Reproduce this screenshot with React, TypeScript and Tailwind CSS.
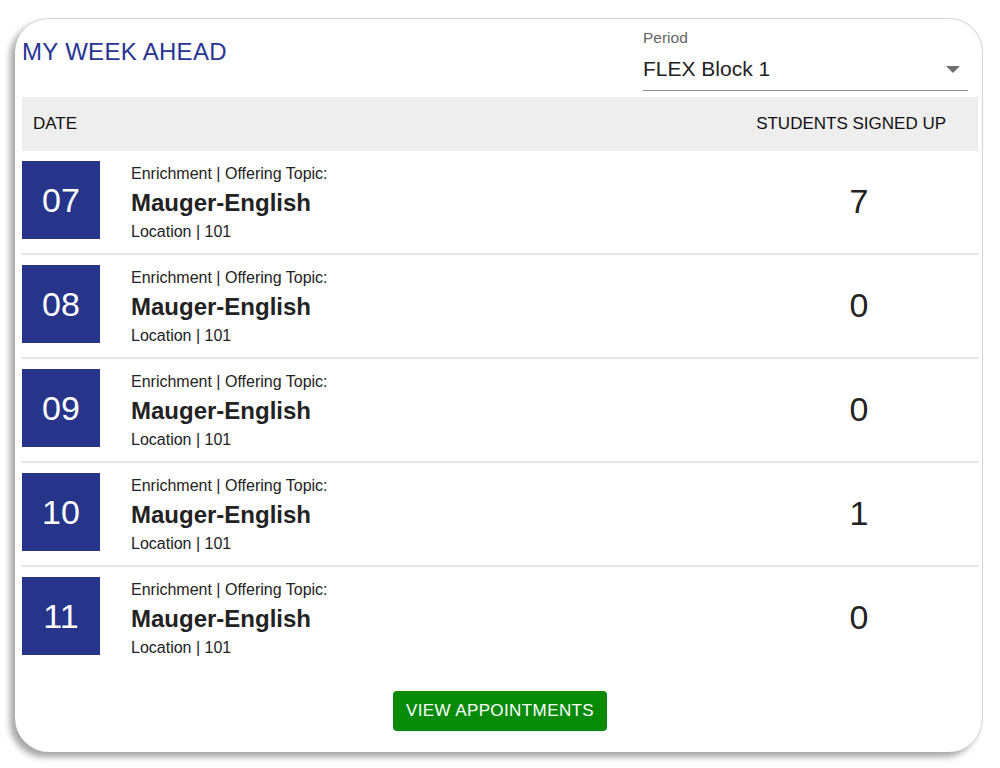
import React from "react";

// Weekly FLEX schedule card: one row per day with the offering and sign-up count.

interface DayRow {
  day: string;
  topic: string;
  location: string;
  count: number;
}

const ROWS: DayRow[] = [
  { day: "07", topic: "Mauger-English", location: "101", count: 7 },
  { day: "08", topic: "Mauger-English", location: "101", count: 0 },
  { day: "09", topic: "Mauger-English", location: "101", count: 0 },
  { day: "10", topic: "Mauger-English", location: "101", count: 1 },
  { day: "11", topic: "Mauger-English", location: "101", count: 0 },
];

function PeriodSelect(): React.JSX.Element {
  return (
    <div className="mr-[10px] w-[325px] pt-[9px]">
      <div className="text-[15.5px] leading-[20px] text-[#666]">Period</div>
      <div className="flex h-[43px] items-center justify-between border-b border-[#8a8a8a] pr-[8px]">
        <span className="text-[21px] text-[#222]">FLEX Block 1</span>
        <svg width="14" height="8" viewBox="0 0 14 8" className="mt-[2px]">
          <path d="M0 0 L14 0 L7 7 Z" fill="#6f6f6f" />
        </svg>
      </div>
    </div>
  );
}

function Row({ row, last }: { row: DayRow; last?: boolean }): React.JSX.Element {
  return (
    <div className={last ? "flex h-[104px] pt-[10px]" : "flex h-[104px] border-b-2 border-[#e6e6e6] pt-[10px]"}>
      <div className="flex h-[78px] w-[78px] shrink-0 items-center justify-center bg-[#26358a] text-[34px] text-white">
        {row.day}
      </div>
      <div className="ml-[31px] flex flex-col pt-[3px]">
        <span className="text-[16px] leading-[20px] text-[#222]">Enrichment | Offering Topic:</span>
        <span className="text-[24px] font-bold leading-[38px] text-[#222]">{row.topic}</span>
        <span className="text-[16px] leading-[20px] text-[#222]">Location | {row.location}</span>
      </div>
      <div className="ml-auto mr-[-1px] flex h-[78px] w-[240px] items-center justify-center pt-[2px] text-[34px] text-[#222]">
        {row.count}
      </div>
    </div>
  );
}

export default function App(): React.JSX.Element {
  return (
    <div className="h-[768px] w-[1000px] bg-white pl-[15px] pr-[17px] pt-[18px] font-['Liberation_Sans',Arial,sans-serif]">
      <div className="h-[734px] rounded-[34px] border-t border-r border-[#d4d4d4] bg-white pl-[7px] pr-[4px] shadow-[-5px_5px_6px_rgba(0,0,0,0.35)]">
        <div className="flex h-[78px] items-start justify-between">
          <h1 className="pt-[18px] text-[24px] font-normal leading-[30px] tracking-[0.3px] text-[#283593]">MY WEEK AHEAD</h1>
          <PeriodSelect />
        </div>
        <div className="flex h-[54px] items-center justify-between bg-[#eeeeee] pl-[11px] pr-[32px] text-[17px] text-[#111]">
          <span>DATE</span>
          <span>STUDENTS SIGNED UP</span>
        </div>
        {ROWS.map((r, i) => (
          <Row key={r.day} row={r} last={i === ROWS.length - 1} />
        ))}
        <div className="flex justify-center pt-[20px]">
          <button className="h-[40px] w-[214px] rounded-[4px] bg-[#078b07] text-[17px] tracking-[0.4px] text-white">
            VIEW APPOINTMENTS
          </button>
        </div>
      </div>
    </div>
  );
}
